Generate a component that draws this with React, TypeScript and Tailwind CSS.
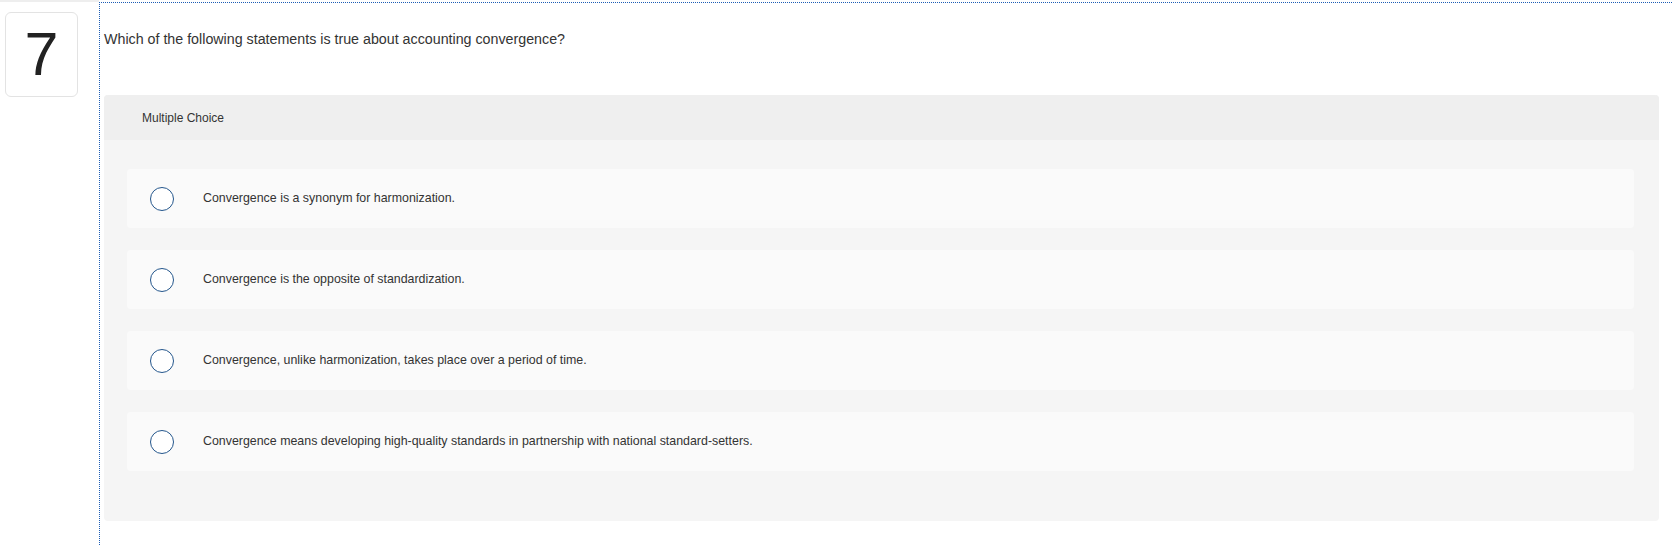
const OPCIONES = [
  'Convergence is a synonym for harmonization.',
  'Convergence is the opposite of standardization.',
  'Convergence, unlike harmonization, takes place over a period of time.',
  'Convergence means developing high-quality standards in partnership with national standard-setters.',
]

export default function App() {
  return (
    <div className="flex h-[545px] w-full overflow-hidden bg-white font-['Liberation_Sans',Arial,sans-serif] text-[#333333]">
      <div className="w-[99px] shrink-0 border-t-[2px] border-[#eeeeee] pl-[5px] pt-[10px]">
        <div className="flex h-[85px] w-[73px] items-center justify-center rounded-md border border-[#e3e3e3] text-[61px] leading-none text-[#222222]">
          7
        </div>
      </div>

      <div className="mt-[2px] flex-1 border-l border-t border-dotted border-[#1c5db5] pl-[4px] pr-[13px] pt-[26px]">
        <p className="text-[14.25px] leading-[20px]">
          Which of the following statements is true about accounting convergence?
        </p>

        <div className="mt-[46px] overflow-hidden rounded-sm bg-[#f5f5f5]">
          <div className="flex h-[45px] items-center bg-[#efefef] pl-[38px] text-[12px]">
            Multiple Choice
          </div>
          <div className="flex flex-col gap-[22px] pb-[50px] pl-[23px] pr-[25px] pt-[29px]">
            {OPCIONES.map((o) => (
              <div
                key={o}
                className="flex h-[59px] items-center rounded-sm bg-[#fafafa] pl-[23px]"
              >
                <span className="mt-[1px] h-[24px] w-[24px] shrink-0 rounded-full border-[1.5px] border-[#24568c] bg-white" />
                <span className="ml-[29px] text-[12.4px] leading-none">{o}</span>
              </div>
            ))}
          </div>
        </div>
      </div>
    </div>
  )
}
